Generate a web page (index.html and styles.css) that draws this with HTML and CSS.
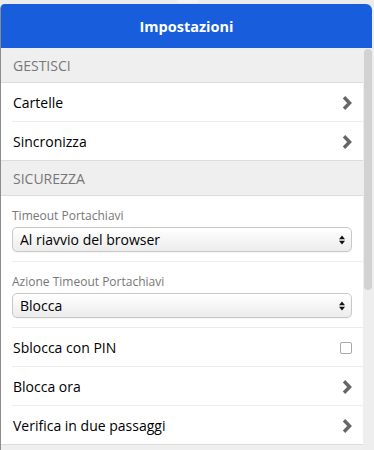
FILE: index.html
```html
<!DOCTYPE html>
<html lang="it">
<head>
<meta charset="utf-8">
<title>Impostazioni</title>
<link rel="stylesheet" href="styles.css">
</head>
<body>
<div class="app">
  <div class="notch"></div>
  <div class="frame">
    <header class="header">Impostazioni</header>
    <div class="body">
      <main class="content">
        <section class="group">
          <h2 class="group-title">GESTISCI</h2>
          <div class="list">
            <a class="row">
              <span>Cartelle</span>
              <svg class="chev" viewBox="0 0 10 16" width="10" height="16"><path d="M2 2.2 L7.6 8 L2 13.8"/></svg>
            </a>
            <a class="row">
              <span>Sincronizza</span>
              <svg class="chev" viewBox="0 0 10 16" width="10" height="16"><path d="M2 2.2 L7.6 8 L2 13.8"/></svg>
            </a>
          </div>
        </section>
        <section class="group">
          <h2 class="group-title">SICUREZZA</h2>
          <div class="list">
            <div class="field">
              <label class="field-label">Timeout Portachiavi</label>
              <div class="select-wrap">
                <select class="select"><option>Al riavvio del browser</option></select>
                <svg class="arrows" viewBox="0 0 6 10" width="6" height="10"><path d="M0 4.2 L3 0.4 L6 4.2 Z M0 5.8 L3 9.6 L6 5.8 Z"/></svg>
              </div>
            </div>
            <div class="field">
              <label class="field-label">Azione Timeout Portachiavi</label>
              <div class="select-wrap">
                <select class="select"><option>Blocca</option></select>
                <svg class="arrows" viewBox="0 0 6 10" width="6" height="10"><path d="M0 4.2 L3 0.4 L6 4.2 Z M0 5.8 L3 9.6 L6 5.8 Z"/></svg>
              </div>
            </div>
            <label class="row">
              <span>Sblocca con PIN</span>
              <span class="check"></span>
            </label>
            <a class="row">
              <span>Blocca ora</span>
              <svg class="chev" viewBox="0 0 10 16" width="10" height="16"><path d="M2 2.2 L7.6 8 L2 13.8"/></svg>
            </a>
            <a class="row">
              <span>Verifica in due passaggi</span>
              <svg class="chev" viewBox="0 0 10 16" width="10" height="16"><path d="M2 2.2 L7.6 8 L2 13.8"/></svg>
            </a>
          </div>
        </section>
      </main>
      <div class="track"><div class="thumb"></div></div>
    </div>
  </div>
</div>
</body>
</html>
```
FILE: styles.css
```css
html, body {
  margin: 0;
  padding: 0;
  height: 100%;
}
body {
  background: #ececec;
  font-family: "Open Sans", "Noto Sans", sans-serif;
  color: #000;
  overflow: hidden;
}
.app {
  position: relative;
  height: 100vh;
  display: flex;
  flex-direction: column;
  padding-top: 4px;
  box-sizing: border-box;
}
.notch {
  position: absolute;
  top: 0;
  left: 177px;
  width: 22px;
  height: 3px;
  background: #f3f3f3;
  border-radius: 0 0 3px 3px;
}
.frame {
  flex: 1;
  min-height: 0;
  display: flex;
  flex-direction: column;
  border-left: 1px solid #8c8c8c;
  border-top-left-radius: 5px;
}
.header {
  height: 44px;
  flex: none;
  background: #175ddc;
  color: #fff;
  font-weight: 700;
  font-size: 14.5px;
  display: flex;
  align-items: center;
  justify-content: center;
  border-radius: 4px 6px 0 0;
  margin-right: 2px;
}
.body {
  flex: 1;
  min-height: 0;
  display: flex;
}
.content {
  flex: 1;
  min-width: 0;
  overflow: hidden;
  background: #efefef;
}
.track {
  width: 11px;
  flex: none;
  background: #eeeeee;
  padding: 1px 2px 0 1px;
  box-sizing: border-box;
}
.thumb {
  height: 241px;
  background: #d2d2d2;
  border-radius: 4px;
}
.group-title {
  margin: 0;
  height: 34px;
  display: flex;
  align-items: center;
  padding-left: 12px;
  font-size: 14px;
  font-weight: 400;
  color: #777;
  background: #efefef;
  border-bottom: 1px solid #dcdcdc;
}
.list {
  background: #fff;
  border-bottom: 1px solid #dcdcdc;
  display: flex;
  flex-direction: column;
}
.list > * + * {
  border-top: 1px solid #ececec;
}
.list > * {
  margin-left: 11px;
}
.row {
  height: 38px;
  display: flex;
  align-items: center;
  justify-content: space-between;
  padding: 1px 11px 0 1px;
  box-sizing: border-box;
  font-size: 14px;
  color: #000;
  text-decoration: none;
}
.list > * + .row {
  height: 39px;
}
.chev {
  fill: none;
  stroke: #666;
  stroke-width: 3.4;
  stroke-linejoin: miter;
  stroke-linecap: butt;
}
.check {
  width: 10px;
  height: 10px;
  border: 1px solid #a8a8a8;
  border-radius: 2px;
  background: #fff;
}
.field {
  display: flex;
  flex-direction: column;
  padding: 12px 11px 9px 0;
}
.field-label {
  font-size: 12px;
  line-height: 16px;
  color: #777;
  margin-bottom: 3px;
}
.select-wrap {
  position: relative;
}
.select {
  appearance: none;
  -webkit-appearance: none;
  width: 100%;
  height: 25px;
  margin: 0;
  padding: 0 0 0 7px;
  font-family: "Open Sans", "Noto Sans", sans-serif;
  font-size: 14px;
  color: #000;
  border: 1px solid #c8c8c8;
  border-radius: 5px;
  background: linear-gradient(#ffffff, #ececec);
  box-shadow: 0 1px 0 rgba(0,0,0,0.04);
}
.arrows {
  position: absolute;
  right: 7px;
  top: 8px;
  fill: #111;
}
```
